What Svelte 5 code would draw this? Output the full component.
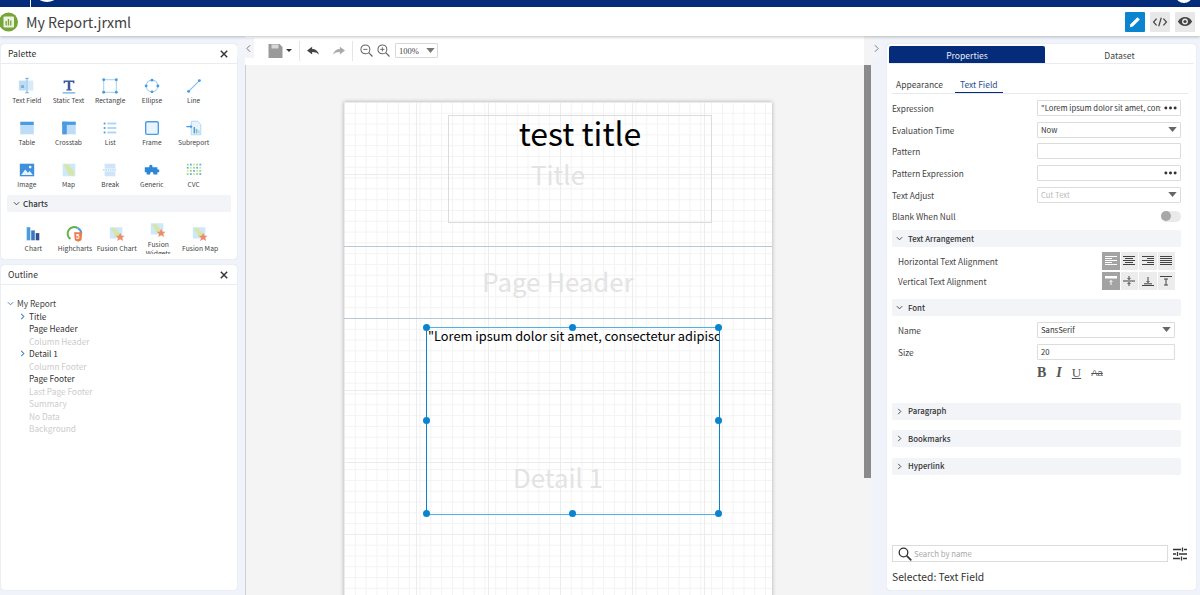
<script>
  const palette = [
    ["field", "Text Field"], ["static", "Static Text"], ["rect", "Rectangle"], ["ellipse", "Ellipse"], ["line", "Line"],
    ["table", "Table"], ["crosstab", "Crosstab"], ["list", "List"], ["frame", "Frame"], ["subreport", "Subreport"],
    ["image", "Image"], ["map", "Map"], ["break", "Break"], ["generic", "Generic"], ["cvc", "CVC"]
  ];
  const charts = [
    ["chart", "Chart"], ["high", "Highcharts"], ["fusion", "Fusion Chart"], ["fusion", "Fusion Widgets"], ["fusion", "Fusion Map"]
  ];
  const outline = [
    ["Title", true, true], ["Page Header", false, true], ["Column Header", false, false], ["Detail 1", true, true],
    ["Column Footer", false, false], ["Page Footer", false, true], ["Last Page Footer", false, false],
    ["Summary", false, false], ["No Data", false, false], ["Background", false, false]
  ];
  const handles = [[0, 0], [50, 0], [100, 0], [0, 50], [100, 50], [0, 100], [50, 100], [100, 100]];
</script>

{#snippet chevron(dir)}
  <svg class="chev" viewBox="0 0 8 8" width="7" height="7">
    {#if dir === "down"}<path d="M1 2.5 4 5.5 7 2.5" fill="none" stroke="#444" stroke-width="1.1"/>
    {:else}<path d="M2.5 1 5.5 4 2.5 7" fill="none" stroke="#444" stroke-width="1.1"/>{/if}
  </svg>
{/snippet}

{#snippet close()}
  <svg viewBox="0 0 10 10" width="8" height="8"><path d="M1 1 9 9M9 1 1 9" stroke="#333" stroke-width="1.8"/></svg>
{/snippet}

{#snippet caret()}
  <svg viewBox="0 0 10 6" width="9" height="5"><path d="M0 0H10L5 6Z" fill="#666"/></svg>
{/snippet}

{#snippet dots()}
  <svg viewBox="0 0 14 4" width="13" height="4"><circle cx="2" cy="2" r="1.6" fill="#333"/><circle cx="7" cy="2" r="1.6" fill="#333"/><circle cx="12" cy="2" r="1.6" fill="#333"/></svg>
{/snippet}

{#snippet tool(name)}
  <svg viewBox="0 0 20 20" width="18" height="18">
    {#if name === "field"}
      <rect x="1" y="4" width="8" height="11" fill="#bcdcf7"/><rect x="11" y="4" width="6" height="11" fill="#d6eafa"/>
      <path d="M8 1.5h4M10 1.5v16M8 17.5h4" stroke="#5ba6e6" stroke-width="1" fill="none"/>
      <text x="3" y="12.5" font-size="6.5" fill="#5d7f9e" font-family="Liberation Sans, sans-serif">a</text>
    {:else if name === "static"}
      <path d="M4 4H16V7H14.6L14 5.5H11.4V13.5L13 14V15H7V14L8.6 13.5V5.5H6L5.4 7H4Z" fill="#3c5a9a"/>
      <rect x="3" y="17" width="14" height="1.3" fill="#5ba6e6"/>
    {:else if name === "rect"}
      <rect x="3" y="3" width="14" height="14" fill="none" stroke="#a9d4f5" stroke-width="1.2"/>
      <g fill="#4a9be0"><circle cx="3" cy="3" r="1.6"/><circle cx="17" cy="3" r="1.6"/><circle cx="3" cy="17" r="1.6"/><circle cx="17" cy="17" r="1.6"/></g>
    {:else if name === "ellipse"}
      <circle cx="10" cy="10" r="6.5" fill="none" stroke="#a9d4f5" stroke-width="1.2"/>
      <g fill="#4a9be0"><circle cx="10" cy="3.5" r="1.6"/><circle cx="10" cy="16.5" r="1.6"/><circle cx="3.5" cy="10" r="1.6"/><circle cx="16.5" cy="10" r="1.6"/></g>
    {:else if name === "line"}
      <path d="M4 16 16 4" stroke="#7dbbee" stroke-width="1.2"/>
      <g fill="#4a9be0"><circle cx="4" cy="16" r="1.6"/><circle cx="16" cy="4" r="1.6"/></g>
    {:else if name === "table"}
      <rect x="2.5" y="3" width="15" height="4" fill="#4a9be0"/><rect x="2.5" y="7" width="15" height="10" fill="#bcdcf7"/>
    {:else if name === "crosstab"}
      <rect x="2.5" y="3" width="15" height="14" fill="#bcdcf7"/><rect x="2.5" y="3" width="15" height="3.5" fill="#4a9be0"/><rect x="2.5" y="3" width="5" height="14" fill="#4a9be0"/>
    {:else if name === "list"}
      <g fill="#4a9be0"><rect x="3" y="4" width="2" height="2"/><rect x="3" y="9" width="2" height="2"/><rect x="3" y="14" width="2" height="2"/></g>
      <g fill="#a9d4f5"><rect x="7" y="4" width="10" height="2"/><rect x="7" y="9" width="10" height="2"/><rect x="7" y="14" width="10" height="2"/></g>
    {:else if name === "frame"}
      <rect x="3" y="3" width="14" height="14" rx="1.5" fill="#eaf4fd" stroke="#4a9be0" stroke-width="1.5"/>
    {:else if name === "subreport"}
      <path d="M7 2.5H14L17.5 6V17.5H7Z" fill="#eaf4fd" stroke="#a9d4f5"/>
      <path d="M1.5 8.5H7" stroke="#4a9be0" stroke-width="1.2"/><path d="M6 6.5 8.5 8.5 6 10.5Z" fill="#4a9be0"/>
      <rect x="9.5" y="9" width="1.7" height="7" fill="#4a9be0"/><rect x="12" y="11" width="1.7" height="5" fill="#7fc3a0"/><rect x="14.5" y="12.5" width="1.7" height="3.5" fill="#a9d4f5"/>
    {:else if name === "image"}
      <rect x="2" y="3" width="16" height="14" fill="#3f8fdc"/>
      <path d="M3.5 15.5 8 9.5 11 13 13 11 16.5 15.5Z" fill="#eaf4fd"/><circle cx="13.5" cy="6.8" r="1.5" fill="#eaf4fd"/>
    {:else if name === "map"}
      <rect x="3" y="3" width="14" height="14" fill="#cfe8f9"/><path d="M4 4H9L16 12V16H10Z" fill="#d5e6a8"/>
    {:else if name === "break"}
      <rect x="4" y="3" width="12" height="5.5" fill="#cfe4f8"/><rect x="4" y="11.5" width="12" height="5.5" fill="#cfe4f8"/>
      <path d="M2.5 10H17.5" stroke="#6aaee8" stroke-width="1" stroke-dasharray="1.5 1"/>
    {:else if name === "generic"}
      <path d="M2 7H7V5.5A1.8 1.8 0 0 1 10.5 5.5V7H16V9.5H18V12.5H16V15H11.5V13.5A1.8 1.8 0 0 0 8 13.5V15H4V12.5H2Z" fill="#2d86d6"/>
    {:else if name === "cvc"}
      {#each [3, 6.5, 10, 13.5, 17] as x, i}
        {#each [4, 7.5, 11, 14.5] as y, j}
          <rect x={x - 1} y={y - 1} width="2" height="2" fill={(i + j) % 3 === 0 ? "#a8d46f" : (i + j) % 3 === 1 ? "#5bb1d9" : "#c9e6b0"}/>
        {/each}
      {/each}
    {:else if name === "chart"}
      <rect x="3" y="2.5" width="4" height="14.5" fill="#4a9be0"/><rect x="8" y="6" width="4" height="11" fill="#3c78bd"/><rect x="13" y="9" width="4" height="8" fill="#2f4f8f"/>
    {:else if name === "high"}
      <path d="M5 15.5A7 7 0 0 1 13 3.5" fill="none" stroke="#63b04a" stroke-width="2.2"/>
      <path d="M13 3.5A7 7 0 0 1 17 9" fill="none" stroke="#4a9be0" stroke-width="2.2"/>
      <path d="M9 8H18L17.2 17 13.5 18.5 9.8 17Z" fill="#ef7a4b"/>
      <text x="11.2" y="15.5" font-size="7" font-weight="700" fill="#fff" font-family="Liberation Sans, sans-serif">5</text>
    {:else if name === "fusion"}
      <rect x="2" y="2.5" width="14" height="12.5" fill="#cfe8f9"/><path d="M3 3.5H8L15 11V14H9Z" fill="#d5e6a8"/>
      <path d="M13.5 8.5 15 12H18.5L15.8 14.2 16.8 17.8 13.5 15.7 10.2 17.8 11.2 14.2 8.5 12H12Z" fill="#f08a6c"/>
    {/if}
  </svg>
{/snippet}

<div class="app">
  <div class="topbar">
    <span class="divider"></span>
    <span class="brand"></span>
    <span class="avatar"></span>
  </div>

  <header class="header">
    <div class="logo">
      <svg viewBox="0 0 19 20" width="19" height="20">
        <circle cx="8.5" cy="10" r="9.5" fill="#76a53a"/>
        <rect x="3.5" y="4.5" width="10.5" height="11" rx="1" fill="#eef3df"/>
        <rect x="5.5" y="9" width="1.3" height="4.5" fill="#76a53a"/><rect x="7.8" y="7" width="1.3" height="6.5" fill="#76a53a"/><rect x="10.1" y="8.5" width="1.3" height="5" fill="#76a53a"/>
      </svg>
    </div>
    <div class="filename">My Report.jrxml</div>
    <div class="modes">
      <button class="mode active" aria-label="Edit">
        <svg viewBox="0 0 16 16" width="14" height="14"><path d="M2 14 2.8 10.5 10.8 2.5 13.5 5.2 5.5 13.2Z" fill="#fff"/></svg>
      </button>
      <button class="mode" aria-label="Source">
        <svg viewBox="0 0 18 14" width="16" height="12"><path d="M5 3 1.5 7 5 11M13 3 16.5 7 13 11M10.5 2 7.5 12" fill="none" stroke="#444" stroke-width="1.4"/></svg>
      </button>
      <button class="mode" aria-label="Preview">
        <svg viewBox="0 0 18 12" width="16" height="11"><path d="M1 6C3 2.5 6 1 9 1S15 2.5 17 6C15 9.5 12 11 9 11S3 9.5 1 6Z" fill="#444"/><circle cx="9" cy="6" r="3.3" fill="#e8e8e8"/><circle cx="9" cy="6" r="1.8" fill="#444"/></svg>
      </button>
    </div>
  </header>

  <main class="workspace">
    <aside class="left">
      <section class="card palette">
        <div class="card-head"><span>Palette</span>{@render close()}</div>
        <div class="tools">
          {#each palette as [icon, label]}
            <div class="tool">{@render tool(icon)}<span>{label}</span></div>
          {/each}
        </div>
        <div class="group-head">{@render chevron("down")}<span>Charts</span></div>
        <div class="tools chart-tools">
          {#each charts as [icon, label]}
            <div class="tool">{@render tool(icon)}<span>{label}</span></div>
          {/each}
        </div>
      </section>

      <section class="card outline">
        <div class="card-head"><span>Outline</span>{@render close()}</div>
        <div class="tree">
          <div class="root">
            <svg viewBox="0 0 8 8" width="7" height="7"><path d="M1 2.5 4 5.5 7 2.5" fill="none" stroke="#3d83c9" stroke-width="1.1"/></svg>
            <span>My Report</span>
          </div>
          {#each outline as [label, expandable, enabled]}
            <div class="node" class:off={!enabled}>
              {#if expandable}
                <svg viewBox="0 0 8 8" width="7" height="7"><path d="M2.5 1 5.5 4 2.5 7" fill="none" stroke="#3d83c9" stroke-width="1.2"/></svg>
              {/if}
              <span>{label}</span>
            </div>
          {/each}
        </div>
      </section>
    </aside>

    <div class="side-toggle left-toggle">
      <svg viewBox="0 0 6 10" width="5" height="9"><path d="M5 1 1 5 5 9" fill="none" stroke="#666"/></svg>
    </div>

    <section class="center">
      <div class="toolbar">
        <svg class="save" viewBox="0 0 14 14" width="15" height="14"><path d="M0 0H11L14 3V14H0Z" fill="#9a9a9a"/><rect x="3" y="0.5" width="7" height="4" fill="#d8d8d8"/></svg>
        <svg viewBox="0 0 8 4" width="6" height="3"><path d="M0 0H8L4 4Z" fill="#333"/></svg>
        <span class="sep"></span>
        <svg viewBox="0 0 14 10" width="12" height="10"><path d="M0 4.5 6 0V2.8C10 2.8 13 5 14 9.5 12 7 9.5 6.2 6 6.2V9Z" fill="#444"/></svg>
        <svg class="redo" viewBox="0 0 14 10" width="12" height="10"><path d="M14 4.5 8 0V2.8C4 2.8 1 5 0 9.5 2 7 4.5 6.2 8 6.2V9Z" fill="#aaa"/></svg>
        <span class="sep"></span>
        <svg viewBox="0 0 14 14" width="13" height="13"><circle cx="5.8" cy="5.8" r="4.8" fill="none" stroke="#666" stroke-width="1.1"/><path d="M9.3 9.3 13.5 13.5" stroke="#666" stroke-width="1.3"/><path d="M3.5 5.8H8" stroke="#666"/></svg>
        <svg viewBox="0 0 14 14" width="13" height="13"><circle cx="5.8" cy="5.8" r="4.8" fill="none" stroke="#666" stroke-width="1.1"/><path d="M9.3 9.3 13.5 13.5" stroke="#666" stroke-width="1.3"/><path d="M3.5 5.8H8M5.8 3.5V8" stroke="#666"/></svg>
        <div class="zoom"><span>100%</span><svg viewBox="0 0 10 6" width="9" height="5"><path d="M0 0H10L5 6Z" fill="#777"/></svg></div>
      </div>

      <div class="canvas">
        <div class="page">
          <div class="band band-title">
            <div class="title-box"><span>test title</span></div>
            <span class="ghost">Title</span>
          </div>
          <div class="band band-header"><span class="ghost">Page Header</span></div>
          <div class="band band-detail">
            <span class="ghost">Detail 1</span>
            <div class="selection">
              <div class="lorem">"Lorem ipsum dolor sit amet, consectetur adipiscing elit</div>
              {#each handles as [x, y]}
                <i class="handle" style="left:{x}%;top:{y}%"></i>
              {/each}
            </div>
          </div>
        </div>
      </div>
    </section>

    <div class="scroll"><div class="thumb"></div></div>

    <div class="side-toggle right-toggle">
      <svg viewBox="0 0 6 10" width="5" height="9"><path d="M1 1 5 5 1 9" fill="none" stroke="#666"/></svg>
    </div>

    <aside class="card props">
      <div class="tabs">
        <div class="tab selected">Properties</div>
        <div class="tab">Dataset</div>
      </div>
      <div class="subtabs">
        <span>Appearance</span>
        <span class="current">Text Field</span>
      </div>

      <div class="form">
        <div class="row"><label>Expression</label><div class="input"><span class="clip">"Lorem ipsum dolor sit amet, consectetur</span>{@render dots()}</div></div>
        <div class="row"><label>Evaluation Time</label><div class="input"><span class="clip">Now</span>{@render caret()}</div></div>
        <div class="row"><label>Pattern</label><div class="input"></div></div>
        <div class="row"><label>Pattern Expression</label><div class="input end">{@render dots()}</div></div>
        <div class="row"><label>Text Adjust</label><div class="input"><span class="clip muted">Cut Text</span>{@render caret()}</div></div>
        <div class="row"><label>Blank When Null</label><div class="toggle"><i></i></div></div>
      </div>

      <div class="section first">{@render chevron("down")}<span>Text Arrangement</span></div>
      <div class="align-row">
        <span>Horizontal Text Alignment</span>
        <div class="btns">
          <b class="on"><svg viewBox="0 0 12 10" width="12" height="10"><path d="M0 .5H12M0 2.5H7M0 4.5H12M0 6.5H7M0 8.5H12" stroke="#fff"/></svg></b>
          <b><svg viewBox="0 0 12 10" width="12" height="10"><path d="M0 .5H12M2 2.5H10M0 4.5H12M2 6.5H10M0 8.5H12" stroke="#444"/></svg></b>
          <b><svg viewBox="0 0 12 10" width="12" height="10"><path d="M0 .5H12M5 2.5H12M0 4.5H12M5 6.5H12M0 8.5H12" stroke="#444"/></svg></b>
          <b><svg viewBox="0 0 12 10" width="12" height="10"><path d="M0 .5H12M0 2.5H12M0 4.5H12M0 6.5H12M0 8.5H12" stroke="#444"/></svg></b>
        </div>
      </div>
      <div class="align-row">
        <span>Vertical Text Alignment</span>
        <div class="btns">
          <b class="on"><svg viewBox="0 0 12 10" width="12" height="10"><path d="M0 0H12V2.5H0Z" fill="#fff"/><path d="M6 9V4.5M4.5 6 6 4.5 7.5 6" stroke="#fff" fill="none"/></svg></b>
          <b><svg viewBox="0 0 12 10" width="12" height="10"><path d="M0 5H12M6 0V3.5M6 6.5V10M4.5 2 6 3.5 7.5 2M4.5 8 6 6.5 7.5 8" stroke="#444" fill="none"/></svg></b>
          <b><svg viewBox="0 0 12 10" width="12" height="10"><path d="M0 9.5H12M6 1V6.5M4.5 5 6 6.5 7.5 5M2 7.8H10" stroke="#444" fill="none"/></svg></b>
          <b><svg viewBox="0 0 12 10" width="12" height="10"><path d="M0 .5H12M6 3V9M4 9H8M4 3H8" stroke="#444" fill="none"/></svg></b>
        </div>
      </div>

      <div class="section font-head">{@render chevron("down")}<span>Font</span></div>
      <div class="form nested">
        <div class="row"><label>Name</label><div class="input"><span class="clip">SansSerif</span>{@render caret()}</div></div>
        <div class="row"><label>Size</label><div class="input"><span class="clip">20</span></div></div>
      </div>
      <div class="styles">
        <span class="s-b">B</span><span class="s-i">I</span><span class="s-u">U</span><span class="s-a">Aa</span>
      </div>

      <div class="section para">{@render chevron("right")}<span>Paragraph</span></div>
      <div class="section tight">{@render chevron("right")}<span>Bookmarks</span></div>
      <div class="section tight">{@render chevron("right")}<span>Hyperlink</span></div>

      <div class="props-foot">
        <div class="search-row">
          <div class="search">
            <svg viewBox="0 0 14 14" width="14" height="14"><circle cx="5.5" cy="5.5" r="4.3" fill="none" stroke="#333" stroke-width="1.3"/><path d="M8.8 8.8 13.3 13.3" stroke="#333" stroke-width="1.7"/></svg>
            <span>Search by name</span>
          </div>
          <svg viewBox="0 0 14 14" width="14" height="14"><path d="M0 2.5H8M11 2.5H14M9.5 .5V4.5M0 7H3M6 7H14M4.5 5V9M0 11.5H7M10 11.5H14M8.5 9.5V13.5" stroke="#333" stroke-width="1.3" fill="none"/></svg>
        </div>
        <div class="status">Selected: Text Field</div>
      </div>
    </aside>
  </main>
</div>

<style>
  :global(body) {
    margin: 0;
    overflow: hidden;
  }

  .app {
    display: flex;
    flex-direction: column;
    width: 1200px;
    height: 595px;
    overflow: hidden;
    background: #f0f3f9;
    color: #333;
    font-family: "Noto Sans CJK SC", "Noto Sans", sans-serif;
  }

  .topbar {
    position: relative;
    flex: none;
    height: 7px;
    background: #052c7b;
    overflow: hidden;
  }
  .divider {
    position: absolute;
    left: 30px;
    top: 0;
    width: 1px;
    height: 7px;
    background: #fff;
  }
  .brand {
    position: absolute;
    left: 38px;
    top: -8px;
    width: 18px;
    height: 10px;
    border-radius: 50%;
    background: #fff;
  }
  .avatar {
    position: absolute;
    left: 1176px;
    top: -11px;
    width: 16px;
    height: 14px;
    border-radius: 50%;
    background: #fff;
  }

  .header {
    position: relative;
    z-index: 2;
    flex: none;
    display: flex;
    align-items: center;
    height: 29px;
    background: #fff;
    box-shadow: 0 1px 3px rgba(0, 0, 0, 0.25);
  }
  .logo {
    display: flex;
    width: 26px;
  }
  .filename {
    font-size: 14.2px;
    line-height: 20px;
    color: #3f3f3f;
  }
  .modes {
    display: flex;
    gap: 5px;
    margin-left: auto;
    margin-right: 5px;
  }
  .mode {
    display: flex;
    align-items: center;
    justify-content: center;
    width: 20px;
    height: 20px;
    padding: 0;
    border: 0;
    border-radius: 1px;
    background: #e8e8e8;
  }
  .mode.active {
    background: #0a84cf;
  }

  .workspace {
    flex: 1;
    display: flex;
    min-height: 0;
  }

  .left {
    flex: none;
    display: flex;
    flex-direction: column;
    gap: 6px;
    width: 236px;
    margin: 8px 0 5px 1px;
  }
  .card {
    background: #fff;
    border-radius: 3px;
    box-shadow: 0 0 1px rgba(60, 80, 120, 0.3);
    overflow: hidden;
  }
  .palette {
    flex: none;
    height: 215px;
  }
  .outline {
    flex: 1;
  }
  .card-head {
    display: flex;
    align-items: center;
    justify-content: space-between;
    height: 19px;
    padding: 0 9px 0 7px;
    border-bottom: 1px solid #e8ecf3;
    font-size: 8.7px;
    line-height: 12px;
    color: #333;
  }

  .tools {
    display: grid;
    grid-template-columns: repeat(5, 41.7px);
    grid-auto-rows: 41.8px;
    padding: 13px 0 0 5px;
  }
  .tool {
    display: flex;
    flex-direction: column;
    align-items: center;
    gap: 1px;
    min-width: 0;
    font-size: 6.6px;
    line-height: 8px;
    color: #444;
    text-align: center;
  }
  .group-head {
    display: flex;
    align-items: center;
    gap: 3px;
    height: 17px;
    margin: -7px 6px 0 6px;
    padding-left: 6px;
    background: #f2f4f8;
    border-radius: 2px;
    font-size: 8px;
    font-weight: 500;
    color: #333;
  }
  .chart-tools {
    grid-auto-rows: 37.5px;
    align-items: center;
    height: 34px;
    padding: 8px 0 0 11.5px;
    overflow: hidden;
  }
  .chart-tools .tool {
    font-size: 6.8px;
    line-height: 8.5px;
  }

  .tree {
    padding-top: 12px;
    font-size: 8.3px;
    line-height: 12.5px;
  }
  .root {
    display: flex;
    align-items: center;
    gap: 3px;
    padding-left: 6px;
    color: #444;
  }
  .node {
    position: relative;
    height: 12.5px;
    padding-left: 28px;
    color: #333;
  }
  .node svg {
    position: absolute;
    left: 18px;
    top: 3px;
  }
  .node.off {
    color: #ccc;
  }

  .side-toggle {
    position: relative;
    z-index: 1;
    flex: none;
    display: flex;
    align-items: center;
    justify-content: center;
    width: 9px;
    height: 20px;
    margin: 2px 0 0 0;
    background: #f2f4fa;
  }
  .left-toggle {
    width: 17px;
    margin-right: -8px;
    padding-left: 5px;
    box-sizing: border-box;
  }

  .center {
    flex: 1;
    display: flex;
    flex-direction: column;
    min-width: 0;
  }
  .toolbar {
    flex: none;
    display: flex;
    align-items: center;
    height: 29px;
    margin-left: -1px;
    padding-left: 23px;
    background: #fff;
  }
  .save {
    margin-right: -1px;
  }
  .sep {
    width: 1px;
    height: 20px;
    margin: 0 7px;
    background: #e6e6e6;
  }
  .toolbar svg + svg {
    margin-left: 4px;
  }
  .toolbar svg.redo {
    margin-left: 14px;
  }
  .zoom {
    display: flex;
    align-items: center;
    justify-content: space-between;
    width: 43px;
    height: 15px;
    margin-left: 5px;
    padding: 0 2px 0 3px;
    border: 1px solid #d8d8d8;
    border-radius: 1px;
    font-family: "Liberation Serif", serif;
    font-size: 8.5px;
    color: #444;
    box-sizing: border-box;
  }

  .canvas {
    flex: 1;
    min-height: 0;
    margin-left: -1px;
    padding: 37px 0 0 98px;
    background: #f4f4f4;
    border-left: 1px solid #cfcfcf;
    overflow: hidden;
  }
  .page {
    width: 428px;
    background-color: #fff;
    background-image:
      linear-gradient(to right, #ececec 1px, transparent 1px),
      linear-gradient(to bottom, #ececec 1px, transparent 1px),
      linear-gradient(to right, #f3f3f3 1px, transparent 1px),
      linear-gradient(to bottom, #f3f3f3 1px, transparent 1px);
    background-size: 72px 72px, 72px 72px, 10.8px 10.8px, 10.8px 10.8px;
    box-shadow: 0 0 4px rgba(0, 0, 0, 0.3);
  }
  .band {
    position: relative;
    display: flex;
    align-items: center;
    justify-content: center;
    box-sizing: border-box;
  }
  .band-title {
    height: 145px;
    border-bottom: 1px solid #b9c8d8;
  }
  .band-header {
    height: 72px;
    border-bottom: 1px solid #b9c8d8;
  }
  .band-detail {
    height: 316px;
  }
  .ghost {
    font-size: 25.8px;
    line-height: 34px;
    color: #e3e3e3;
  }
  .band-header .ghost {
    margin-top: -3px;
  }

  .title-box {
    position: absolute;
    left: 104px;
    top: 13px;
    width: 264px;
    height: 108px;
    box-sizing: border-box;
    border: 1px solid #dcdcdc;
    text-align: center;
    font-size: 32px;
    line-height: 32px;
    color: #000;
  }
  .selection {
    position: absolute;
    left: 82px;
    top: 8px;
    width: 294px;
    height: 188px;
    border: 1px solid #0a84cf;
    border-top-color: #4fb0e6;
    border-bottom-color: #4fb0e6;
    box-sizing: border-box;
  }
  .lorem {
    height: 100%;
    overflow: hidden;
    padding-left: 1px;
    font-size: 12.8px;
    line-height: 16px;
    white-space: nowrap;
    color: #000;
  }
  .handle {
    position: absolute;
    width: 7px;
    height: 7px;
    margin: -4px 0 0 -4px;
    border-radius: 50%;
    background: #0a84cf;
  }

  .scroll {
    flex: none;
    width: 7px;
    background: #f4f4f4;
    padding-top: 29px;
  }
  .thumb {
    height: 413px;
    background: #8a8a8a;
  }
  .right-toggle {
    width: 11px;
  }

  .props {
    flex: none;
    display: flex;
    flex-direction: column;
    width: 309px;
    margin: 8px 4px 5px 5px;
    padding: 2px 15px 0 5px;
    box-sizing: border-box;
    font-size: 8.3px;
    line-height: 12px;
    color: #444;
  }
  .tabs {
    display: grid;
    grid-template-columns: 156px 1fr;
    flex: none;
    height: 18px;
    margin: 0 -13px 0 -3px;
    border-bottom: 1px solid #e8ecf3;
    box-sizing: border-box;
  }
  .tab {
    display: flex;
    align-items: center;
    justify-content: center;
    font-size: 8.6px;
    color: #444;
  }
  .tab.selected {
    background: #052c7b;
    color: #e6ecf6;
    border-radius: 2px 2px 0 0;
  }
  .subtabs {
    flex: none;
    display: flex;
    align-items: center;
    gap: 17px;
    height: 29px;
    margin: 0 -7px 0 0;
    padding: 0 0 0 4px;
    border-bottom: 1px solid #e6eaf0;
    font-size: 8.5px;
    color: #444;
  }
  .subtabs span {
    position: relative;
    top: 5px;
  }
  .subtabs .current {
    color: #2e4f92;
  }
  .subtabs .current::after {
    content: "";
    position: absolute;
    left: -5px;
    right: -5px;
    bottom: -3px;
    height: 1px;
    background: #052c7b;
  }
  .form {
    padding-top: 3px;
  }
  .row {
    display: grid;
    grid-template-columns: 145px 144px;
    align-items: center;
    height: 21.7px;
  }
  .row label {
    color: #444;
  }
  .input {
    display: flex;
    align-items: center;
    justify-content: space-between;
    gap: 3px;
    height: 16px;
    padding: 0 3px;
    box-sizing: border-box;
    border: 1px solid #dcdcdc;
    border-radius: 1px;
    font-size: 7.7px;
    color: #333;
    min-width: 0;
  }
  .input.end {
    justify-content: flex-end;
  }
  .clip {
    flex: 1;
    overflow: hidden;
    white-space: nowrap;
  }
  .muted {
    color: #bbb;
  }
  .toggle {
    justify-self: end;
    display: flex;
    align-items: center;
    width: 20px;
    height: 11px;
    border-radius: 6px;
    background: #eaeaea;
  }
  .toggle i {
    width: 10px;
    height: 10px;
    border-radius: 50%;
    background: #a8a8a8;
  }
  .section {
    flex: none;
    display: flex;
    align-items: center;
    gap: 5px;
    width: 289px;
    height: 17px;
    padding-left: 4px;
    box-sizing: border-box;
    background: #f2f4f8;
    border-radius: 2px;
    font-size: 7.8px;
    font-weight: 500;
    color: #333;
  }
  .section.first {
    margin-top: 3px;
  }
  .align-row {
    flex: none;
    display: flex;
    align-items: center;
    justify-content: space-between;
    width: 283px;
    height: 20px;
    padding-left: 6px;
    box-sizing: border-box;
    font-size: 8.3px;
    color: #444;
  }
  .section.first + .align-row {
    margin-top: 4px;
  }
  .btns {
    display: flex;
    gap: 1px;
  }
  .btns b {
    display: flex;
    align-items: center;
    justify-content: center;
    width: 17.5px;
    height: 18px;
    background: #ececec;
  }
  .btns b.on {
    background: #a3a3a3;
  }
  .font-head {
    margin-top: 8px;
  }
  .nested {
    padding: 3px 0 0 6px;
  }
  .nested .row {
    grid-template-columns: 139px 138px;
  }
  .styles {
    flex: none;
    display: flex;
    align-items: center;
    gap: 10px;
    height: 20px;
    padding-left: 145px;
    font-family: "Liberation Serif", serif;
    font-size: 14px;
    color: #555;
  }
  .s-b {
    font-weight: 700;
  }
  .s-i {
    font-style: italic;
    font-weight: 700;
  }
  .s-u {
    text-decoration: underline;
    font-size: 13px;
  }
  .s-a {
    text-decoration: line-through;
    font-family: "Liberation Sans", sans-serif;
    font-size: 9.5px;
  }
  .para {
    margin-top: 20px;
  }
  .tight {
    margin-top: 10.5px;
  }
  .props-foot {
    margin-top: auto;
    padding-bottom: 5px;
  }
  .search-row {
    display: flex;
    align-items: center;
    gap: 5px;
    width: 296px;
  }
  .search {
    display: flex;
    align-items: center;
    gap: 2px;
    width: 276px;
    height: 17px;
    padding-left: 5px;
    box-sizing: border-box;
    border: 1px solid #dcdcdc;
    font-size: 7.8px;
    color: #aaa;
  }
  .status {
    margin-top: 7px;
    font-size: 10.3px;
    line-height: 16px;
    color: #333;
  }
</style>
